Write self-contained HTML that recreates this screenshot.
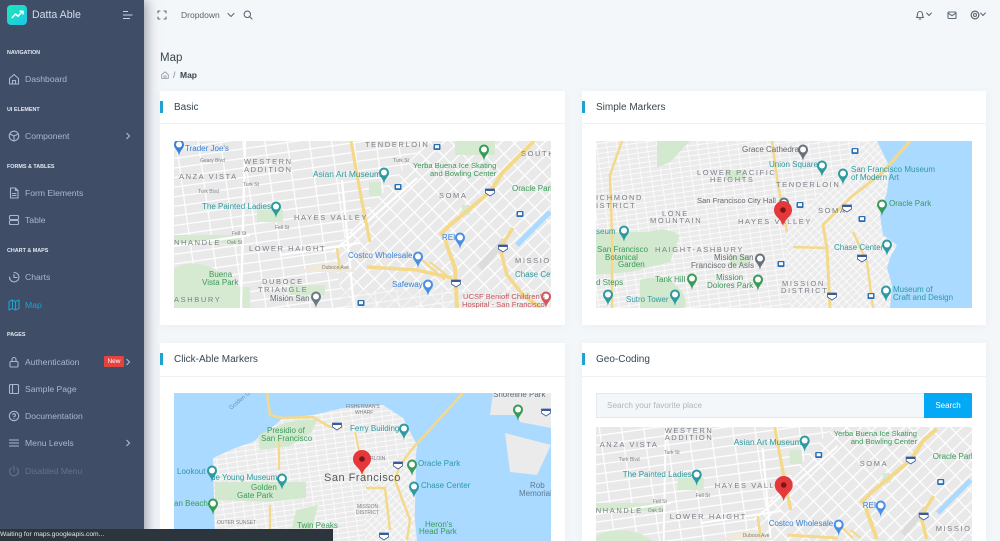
<!DOCTYPE html>
<html lang="en"><head><meta charset="utf-8"><title>Map</title>
<style>
*{box-sizing:border-box}
html,body{margin:0;padding:0;width:1000px;height:541px;overflow:hidden;background:#f4f7fa;font-family:"Liberation Sans",sans-serif}
#w{position:absolute;left:0;top:0;width:1000px;height:541px;overflow:hidden;filter:blur(.3px)}
.a{position:absolute;white-space:nowrap}
#side{position:absolute;left:0;top:0;width:144px;height:541px;background:#3f4d67;box-shadow:2px 0 12px rgba(60,70,90,.55)}
.sec{position:absolute;left:7px;font-size:5.4px;font-weight:bold;color:#e4e9f2;line-height:8px;white-space:nowrap}
.nav{position:absolute;left:25px;font-size:8.6px;color:#a9b7d0;line-height:12px;white-space:nowrap}
.ic{position:absolute;left:8px;width:12px;height:12px;fill:none;stroke:#a9b7d0;stroke-width:1.1;stroke-linecap:round;stroke-linejoin:round}
.chev{position:absolute;left:125px;width:6px;height:8px;fill:none;stroke:#a9b7d0;stroke-width:1.2}
.card{position:absolute;background:#fff;box-shadow:0 1px 8px rgba(69,90,100,.06)}
.bar{position:absolute;width:3px;height:12px;background:#1ea3cf}
.ct{position:absolute;font-size:10px;color:#37474f;line-height:14px;white-space:nowrap}
.hl{position:absolute;height:1px;background:#f1f1f1}
svg.map{position:absolute;display:block;font-family:"Liberation Sans",sans-serif;filter:blur(.25px)}
.hd{fill:none;stroke:#5f6b78;stroke-width:1.1;stroke-linecap:round;stroke-linejoin:round}
.p{font-size:8px}.m{font-size:7.6px}.b{fill:#3b82d6}.t{fill:#2c9aa0}.g{fill:#3a9a58}.r{fill:#c4585d}
.n{font-size:7.5px;fill:#7b8088;letter-spacing:1.6px}
.s{font-size:5px;fill:#7d7f84}
</style></head><body>
<svg width="0" height="0" style="position:absolute"><defs>
<pattern id="g1" width="22" height="9.5" patternUnits="userSpaceOnUse" patternTransform="rotate(-8)"><rect width="22" height="9.5" fill="#e9e9e9"/><path d="M0 .6H22M.6 0V9.5" stroke="#fff" stroke-width="1.2"/></pattern>
<pattern id="g2" width="15" height="10" patternUnits="userSpaceOnUse" patternTransform="rotate(-44)"><rect width="15" height="10" fill="#e9e9e9"/><path d="M0 .6H15M.6 0V10" stroke="#fff" stroke-width="1.2"/></pattern>
<pattern id="g3" width="10" height="5" patternUnits="userSpaceOnUse" patternTransform="rotate(-8)"><rect width="10" height="5" fill="#ebebeb"/><path d="M0 .4H10M.4 0V5" stroke="#fff" stroke-width=".7"/></pattern>
<pattern id="g4" width="7" height="5" patternUnits="userSpaceOnUse" patternTransform="rotate(-44)"><rect width="7" height="5" fill="#ebebeb"/><path d="M0 .4H7M.4 0V5" stroke="#fff" stroke-width=".7"/></pattern>
<g id="pin"><path d="M0 6C-1-.5-5-1-5-5.500A5 5 0 1 1 5-5.500C5-1 1-.5 0 6Z"/><circle cy="-5.500" r="3" fill="#fff"/></g>
<g id="tr"><rect x="-3.500" y="-3" width="7" height="6" rx="1" fill="#2a6fb5"/><rect x="-2" y="-1.800" width="4" height="3" fill="#fff"/></g>
<g id="sh"><path d="M-4.500-3H4.500V1L0 4-4.500 1Z" fill="#fff" stroke="#3a5a9a" stroke-width=".8"/><rect x="-4.500" y="-3" width="9" height="2" fill="#3a5a9a"/></g>
<g id="rp"><path d="M0 0C-2-8-9-9-9-16A9 9 0 1 1 9-16C9-9 2-8 0 0Z" fill="#e5383b"/><circle cy="-16" r="2.800" fill="#7d1518"/></g>
<g id="m1r">
<rect x="174" y="141" width="377" height="167" fill="url(#g1)"/>
<path d="M333 252L427 141H551V308H344Z" fill="url(#g2)"/>
<path d="M300 290L551 290V308H300Z" fill="url(#g1)" opacity=".55"/>
<path d="M174 243H245L242 235H174ZM257 210H283V222H257ZM174 269C195 255 225 270 240 290L232 308H174ZM290 285H325V295H290ZM369 182H381V196H369ZM455 141H495V155H455ZM462 205H470V215H462ZM212 287H250V308H212Z" fill="#d6ead2"/>
<path d="M174 246L250 235M333 252L417 178M280 255L360 243M245 141L241 308M342 180L354 308" stroke="#fff" stroke-width="2.200" fill="none"/>
<path d="M295 272H360L330 262Z" fill="#f1ead8"/>
<path d="M550 212L517 245" stroke="#aadaff" stroke-width="5" fill="none"/>
<path d="M505 240L480 268" stroke="#dcdcdc" stroke-width="7" fill="none"/>
<g fill="none" stroke="#f5d98a" stroke-linejoin="round">
<path d="M351 141L362 202 370 242" stroke-width="3.200"/>
<path d="M534 141L503 172 490 192 450 225 440 235" stroke-width="4"/>
<path d="M445 240L455 268 457 308" stroke-width="4"/>
<path d="M367 267L417 270 452 278" stroke-width="3.500"/>
<path d="M430 262L450 278M420 258L445 280" stroke-width="2"/>
<path d="M513 228L500 248 507 275 523 295 541 308" stroke-width="3.500"/>
<path d="M337 248L340 270" stroke-width="2.500"/>
</g>
</g>
<g id="m4r">
<rect x="175" y="159" width="377" height="114" fill="url(#g1)"/>
<path d="M333 252L412 159H552V273H336Z" fill="url(#g2)"/>
<path d="M175 243H245L242 235H175ZM257 210H283V222H257ZM175 268C195 258 220 262 232 273H175ZM369 182H381V196H369ZM462 205H470V215H462Z" fill="#d6ead2"/>
<path d="M175 246L250 235M333 252L417 178M280 255L360 243M245 159L243 273M342 180L350 273" stroke="#fff" stroke-width="2" fill="none"/>
<path d="M295 272H355L330 262Z" fill="#f1ead8"/>
<path d="M550 212L517 245" stroke="#aadaff" stroke-width="5" fill="none"/>
<path d="M505 240L482 266" stroke="#dcdcdc" stroke-width="6" fill="none"/>
<g fill="none" stroke="#f5d98a" stroke-linejoin="round">
<path d="M354 159L362 202 370 242" stroke-width="3.200"/>
<path d="M516 161L503 172 490 192 450 225 440 235" stroke-width="4"/>
<path d="M445 240L455 268 456 271" stroke-width="4"/>
<path d="M367 267L417 270" stroke-width="3"/>
<path d="M430 262L440 270M420 258L432 270" stroke-width="2"/>
<path d="M513 228L500 248 506 271" stroke-width="3.500"/>
<path d="M337 248L340 270" stroke-width="2.500"/>
</g>
</g>
</defs></svg>

<div id="w">
<div id="side">
<div class="a" style="left:7px;top:5px;width:20px;height:20px;border-radius:4px;background:linear-gradient(135deg,#1de9b6,#1dc4e9)"></div>
<svg class="a" style="left:11px;top:10px" width="13" height="10" fill="none" stroke="#fff" stroke-width="1.500" stroke-linejoin="round"><path d="M.8 8L4.500 4 7 6.200 11.500 1.500M8.500 1.300H12V4.500"/></svg>
<div class="a" style="left:32px;top:9px;font-size:10.6px;line-height:13px;color:#d5dce8">Datta Able</div>
<svg class="a" style="left:122px;top:10px" width="11" height="10" stroke="#c9d2e0" stroke-width="1.100"><path d="M1 1.500H6M1 5H10.500M1 8.500H8"/></svg>

<div class="sec" style="top:49px">NAVIGATION</div>
<svg class="ic" style="top:73px" viewBox="0 0 12 12"><path d="M1.500 5.500L6 1.500 10.500 5.500V11H1.500ZM4.500 11V7.500H7.500V11"/></svg><div class="nav" style="top:73px">Dashboard</div>
<div class="sec" style="top:106px">UI ELEMENT</div>
<svg class="ic" style="top:130px" viewBox="0 0 12 12"><circle cx="6" cy="6" r="4.800"/><path d="M1.800 4L6 6 10.200 4M6 6V10.800"/></svg><div class="nav" style="top:130px">Component</div>
<svg class="chev" style="top:132px" viewBox="0 0 6 8"><path d="M1.500 1L4.500 4 1.500 7"/></svg>
<div class="sec" style="top:163px">FORMS &amp; TABLES</div>
<svg class="ic" style="top:187px" viewBox="0 0 12 12"><path d="M2.500 1H7.500L10 3.500V11H2.500ZM7.500 1V3.500H10M4.500 6.500H8M4.500 8.500H8"/></svg><div class="nav" style="top:187px">Form Elements</div>
<svg class="ic" style="top:214px" viewBox="0 0 12 12"><rect x="1.500" y="1.500" width="9" height="4" rx="1"/><rect x="1.500" y="6.500" width="9" height="4" rx="1"/></svg><div class="nav" style="top:214px">Table</div>
<div class="sec" style="top:247px">CHART &amp; MAPS</div>
<svg class="ic" style="top:271px" viewBox="0 0 12 12"><path d="M6 1.500A4.700 4.700 0 1 1 1.500 6M6 3.500V6.500H9"/></svg><div class="nav" style="top:271px">Charts</div>
<svg class="ic" style="top:299px;stroke:#1ea3cf" viewBox="0 0 12 12"><path d="M1 2.500L4.500 1 7.500 2.500 11 1V9.500L7.500 11 4.500 9.500 1 11ZM4.500 1V9.500M7.500 2.500V11"/></svg><div class="nav" style="top:299px;color:#1ea3cf">Map</div>
<div class="sec" style="top:331px">PAGES</div>
<svg class="ic" style="top:356px" viewBox="0 0 12 12"><rect x="2" y="5.500" width="8" height="5.500" rx="1"/><path d="M4 5.500V3.500A2 2 0 0 1 8 3.500V5.500"/></svg><div class="nav" style="top:356px">Authentication</div>
<div class="a" style="left:104px;top:356px;width:20px;height:11px;background:#e5433f;color:#fff;font-size:6.5px;line-height:11px;text-align:center;border-radius:1px">New</div>
<svg class="chev" style="top:358px" viewBox="0 0 6 8"><path d="M1.500 1L4.500 4 1.500 7"/></svg>
<svg class="ic" style="top:383px" viewBox="0 0 12 12"><rect x="1.500" y="1.500" width="9" height="9" rx="1"/><path d="M4.500 1.500V10.500"/></svg><div class="nav" style="top:383px">Sample Page</div>
<svg class="ic" style="top:410px" viewBox="0 0 12 12"><circle cx="6" cy="6" r="4.700"/><path d="M4.700 4.700A1.400 1.400 0 1 1 6 6.500V7M6 8.700V8.800"/></svg><div class="nav" style="top:410px">Documentation</div>
<svg class="ic" style="top:437px" viewBox="0 0 12 12"><path d="M1.500 3H10.500M1.500 6H10.500M1.500 9H10.500"/></svg><div class="nav" style="top:437px">Menu Levels</div>
<svg class="chev" style="top:439px" viewBox="0 0 6 8"><path d="M1.500 1L4.500 4 1.500 7"/></svg>
<svg class="ic" style="top:465px;stroke:#65728a" viewBox="0 0 12 12"><path d="M3.200 3A4.400 4.400 0 1 0 8.800 3M6 1V6"/></svg><div class="nav" style="top:465px;color:#65728a">Disabled Menu</div>
</div>

<svg class="a hd" style="left:157px;top:10px" width="10" height="10" viewBox="0 0 10 10"><path d="M1 3V1H3M7 1H9V3M9 7V9H7M3 9H1V7"/></svg>
<div class="a" style="left:181px;top:9px;font-size:8.5px;line-height:12px;color:#59636f">Dropdown</div>
<svg class="a hd" style="left:227px;top:12px" width="8" height="6" viewBox="0 0 8 6"><path d="M1 1.500L4 4.500 7 1.500"/></svg>
<svg class="a hd" style="left:243px;top:10px" width="10" height="10" viewBox="0 0 10 10"><circle cx="4.300" cy="4.300" r="3.200"/><path d="M6.800 6.800L9 9"/></svg>
<svg class="a hd" style="left:915px;top:10px" width="10" height="10" viewBox="0 0 10 10"><path d="M1.500 7.500H8.500C7.500 6.500 7.500 5.500 7.500 4A2.500 2.500 0 0 0 2.500 4C2.500 5.500 2.500 6.500 1.500 7.500ZM4 9H6"/></svg>
<svg class="a hd" style="left:926px;top:12px" width="6" height="5" viewBox="0 0 6 5"><path d="M.7 1L3 3.500 5.300 1"/></svg>
<svg class="a hd" style="left:947px;top:10px" width="10" height="10" viewBox="0 0 10 10"><rect x="1" y="2" width="8" height="6.500" rx=".8"/><path d="M1 3L5 5.700 9 3"/></svg>
<svg class="a hd" style="left:970px;top:10px" width="10" height="10" viewBox="0 0 10 10"><circle cx="5" cy="5" r="1.500"/><circle cx="5" cy="5" r="3.800" stroke-dasharray="1.800 .6" stroke-width="1.300"/></svg>
<svg class="a hd" style="left:980px;top:12px" width="6" height="5" viewBox="0 0 6 5"><path d="M.7 1L3 3.500 5.300 1"/></svg>

<div class="a" style="left:160px;top:51px;font-size:11.5px;line-height:14px;color:#37474f">Map</div>
<svg class="a" style="left:161px;top:71px" width="8" height="8" viewBox="0 0 8 8" fill="none" stroke="#8a949e" stroke-width=".8"><path d="M.7 3.700L4 .8 7.300 3.700V7.400H.7ZM3 7.400V5H5V7.400"/></svg>
<div class="a" style="left:173px;top:70px;font-size:9px;line-height:11px;color:#7b8690">/</div>
<div class="a" style="left:180px;top:70px;font-size:8.500px;line-height:11px;font-weight:bold;color:#37474f">Map</div>

<div class="card" style="left:160px;top:91px;width:405px;height:234px"></div>
<div class="card" style="left:582px;top:91px;width:404px;height:234px"></div>
<div class="card" style="left:160px;top:343px;width:405px;height:198px"></div>
<div class="card" style="left:582px;top:343px;width:404px;height:198px"></div>
<div class="hl" style="left:160px;top:123px;width:405px"></div>
<div class="hl" style="left:582px;top:123px;width:404px"></div>
<div class="hl" style="left:160px;top:376px;width:405px"></div>
<div class="hl" style="left:582px;top:376px;width:404px"></div>
<div class="bar" style="left:160px;top:101px"></div>
<div class="bar" style="left:582px;top:101px"></div>
<div class="bar" style="left:160px;top:353px"></div>
<div class="bar" style="left:582px;top:353px"></div>
<div class="ct" style="left:174px;top:101px">Basic</div>
<div class="ct" style="left:596px;top:101px">Simple Markers</div>
<div class="ct" style="left:174px;top:353px">Click-Able Markers</div>
<div class="ct" style="left:596px;top:353px">Geo-Coding</div>

<svg class="map" style="left:174px;top:141px" width="377" height="167" viewBox="174 141 377 167">
<use href="#m1r"/>
<use href="#pin" x="179" y="150" fill="#3b82d6"/><use href="#pin" x="484" y="155" fill="#3a9a58"/><use href="#pin" x="384" y="178" fill="#2c9aa0"/><use href="#pin" x="276" y="212" fill="#2c9aa0"/><use href="#pin" x="460" y="243" fill="#4a8fe0"/><use href="#pin" x="418" y="262" fill="#4a8fe0"/><use href="#pin" x="428" y="290" fill="#4a8fe0"/><use href="#pin" x="316" y="302" fill="#6b7680"/><use href="#pin" x="546" y="302" fill="#d0565c"/>
<use href="#tr" x="437" y="147"/><use href="#tr" x="398" y="187"/><use href="#tr" x="520" y="214"/><use href="#tr" x="361" y="303"/>
<use href="#sh" x="490" y="192"/><use href="#sh" x="503" y="248"/><use href="#sh" x="456" y="283"/>
<text x="185" y="151" class="p b">Trader Joe's</text>
<text x="365" y="147" class="n">TENDERLOIN</text><text x="521" y="156" class="n">SOUTH</text>
<text x="244" y="164" class="n">WESTERN</text><text x="244" y="172" class="n">ADDITION</text><text x="179" y="179" class="n">ANZA VISTA</text>
<text x="413" y="168" class="m g">Yerba Buena Ice Skating</text><text x="430" y="176" class="m g">and Bowling Center</text>
<text x="313" y="177" class="t" font-size="8.4">Asian Art Museum</text><text x="512" y="191" class="p g">Oracle Park</text>
<text x="439" y="198" class="n">SOMA</text><text x="202" y="209" class="p t">The Painted Ladies</text><text x="294" y="220" class="n">HAYES VALLEY</text>
<text x="174" y="245" class="n">NHANDLE</text><text x="249" y="251" class="n">LOWER HAIGHT</text>
<text x="442" y="240" class="p b">REI</text><text x="348" y="258" class="p b">Costco Wholesale</text><text x="515" y="263" class="n">MISSIO</text>
<text x="515" y="277" class="p t">Chase Cen</text><text x="392" y="287" class="p b">Safeway</text>
<text x="209" y="277" class="p g">Buena</text><text x="202" y="285" class="p g">Vista Park</text>
<text x="262" y="284" class="n">DUBOCE</text><text x="258" y="292" class="n">TRIANGLE</text><text x="174" y="302" class="n">ASHBURY</text><text x="270" y="301" class="p" fill="#666c72">Misión San</text>
<text x="463" y="299" class="m r">UCSF Benioff Children's</text><text x="462" y="307" class="m r">Hospital - San Francisco</text>
<text x="200" y="162" class="s">Geary Blvd</text><text x="198" y="193" class="s">Turk Blvd</text><text x="243" y="186" class="s">Turk St</text><text x="393" y="162" class="s">Turk St</text><text x="275" y="229" class="s">Fell St</text><text x="232" y="235" class="s">Fell St</text><text x="227" y="244" class="s">Oak St</text><text x="322" y="269" class="s">Duboce Ave</text>
</svg>

<svg class="map" style="left:596px;top:141px" width="376" height="167" viewBox="596 141 376 167">
<rect x="596" y="141" width="376" height="167" fill="url(#g3)"/>
<path d="M785 232L866 141H900V308H790Z" fill="url(#g4)"/>
<path d="M877 141L890 168 887 192 880 215 883 235 897 245 890 258 887 268 892 285 890 308H972V141Z" fill="#aadaff"/>
<path d="M596 232H645C655 232 660 225 680 235L670 262 630 272 596 275ZM657 141H690L670 162 657 168ZM640 280C665 270 690 290 685 308H640ZM730 255H750V265H730ZM725 170H745V180H725Z" fill="#d3e9cf"/>
<g fill="none" stroke="#f5d98a" stroke-linejoin="round"><path d="M622 141L610 175 612 235V308" stroke-width="2.500"/><path d="M772 141L778 185 787 232" stroke-width="2.500"/><path d="M910 141L883 172 850 198 823 225 827 248 830 308" stroke-width="3"/><path d="M793 247L827 248" stroke-width="2.500"/><path d="M853 232L867 262 873 308" stroke-width="2.500"/></g>
<use href="#pin" x="803" y="155" fill="#68727c"/><use href="#pin" x="822" y="171" fill="#2c9aa0"/><use href="#pin" x="843" y="179" fill="#2c9aa0"/><use href="#pin" x="784" y="208" fill="#68727c"/><use href="#pin" x="882" y="210" fill="#3a9a58"/><use href="#pin" x="624" y="236" fill="#2c9aa0"/><use href="#pin" x="887" y="250" fill="#2c9aa0"/><use href="#pin" x="760" y="264" fill="#68727c"/><use href="#pin" x="692" y="284" fill="#3a9a58"/><use href="#pin" x="758" y="285" fill="#3a9a58"/><use href="#pin" x="608" y="300" fill="#2c9aa0"/><use href="#pin" x="675" y="300" fill="#2c9aa0"/><use href="#pin" x="886" y="296" fill="#2c9aa0"/>
<use href="#tr" x="855" y="151"/><use href="#tr" x="800" y="205"/><use href="#tr" x="862" y="219"/><use href="#tr" x="781" y="264"/><use href="#tr" x="871" y="296"/>
<use href="#sh" x="847" y="208"/><use href="#sh" x="862" y="258"/><use href="#sh" x="832" y="296"/>
<text x="742" y="152" class="p" fill="#666c72">Grace Cathedral</text><text x="769" y="167" class="p t">Union Square</text><text x="851" y="172" class="p t">San Francisco Museum</text><text x="851" y="180" class="p t">of Modern Art</text><text x="697" y="203" class="m" fill="#666c72">San Francisco City Hall</text><text x="889" y="206" class="p g">Oracle Park</text><text x="596" y="234" class="p t">seum</text><text x="597" y="252" class="p g">San Francisco</text><text x="605" y="260" class="p g">Botanical</text><text x="618" y="267" class="p g">Garden</text><text x="714" y="260" class="p" fill="#666c72">Misión San</text><text x="691" y="268" class="p" fill="#666c72">Francisco de Asís</text><text x="834" y="250" class="p t">Chase Center</text><text x="655" y="282" class="p g">Tank Hill</text><text x="716" y="280" class="p g">Mission</text><text x="707" y="288" class="p g">Dolores Park</text><text x="596" y="285" class="p g">d Steps</text><text x="626" y="302" class="p t">Sutro Tower</text><text x="893" y="292" class="p t">Museum of</text><text x="893" y="300" class="p t">Craft and Design</text>
<text x="697" y="175" class="n">LOWER PACIFIC</text><text x="710" y="182" class="n">HEIGHTS</text><text x="776" y="187" class="n">TENDERLOIN</text><text x="596" y="200" class="n">ICHMOND</text><text x="596" y="208" class="n">ISTRICT</text><text x="662" y="216" class="n">LONE</text><text x="650" y="223" class="n">MOUNTAIN</text><text x="738" y="224" class="n">HAYES VALLEY</text><text x="818" y="213" class="n">SOMA</text><text x="655" y="252" class="n">HAIGHT-ASHBURY</text><text x="782" y="286" class="n">MISSION</text><text x="781" y="293" class="n">DISTRICT</text>
<use href="#rp" x="783" y="226"/>
</svg>

<svg class="map" style="left:174px;top:393px" width="377" height="148" viewBox="174 393 377 148">
<rect x="174" y="393" width="377" height="148" fill="#aadaff"/>
<path d="M213 458L235 448 253 442 275 425 283 418 313 415 343 408 383 405 403 418 417 445 415 465 410 485 413 500 417 541H215Z" fill="url(#g3)"/>
<path d="M365 480L410 450 416 470 414 541H365Z" fill="url(#g4)"/>
<path d="M258 436C275 425 295 418 317 420L312 432 290 446 260 450ZM215 482H306V498L270 502 215 500ZM296 510L318 505 312 530 292 528Z" fill="#d3e9cf"/>
<path d="M493 393H551V428L520 422 517 415 490 415ZM505 433L551 445 537 475 510 472Z" fill="#ebebeb"/>
<g fill="none" stroke="#f5d98a" stroke-linejoin="round"><path d="M267 393L270 415 283 418 313 417 330 427 343 427" stroke-width="2.500"/><path d="M279 440V470M270 505V540" stroke-width="2.200"/><path d="M355 432L365 480" stroke-width="2"/><path d="M463 393L413 448 400 465 395 480 410 520 407 540" stroke-width="2.500"/><path d="M366 488H385L390 530" stroke-width="2.500"/></g>
<use href="#pin" x="518" y="415" fill="#3a9a58"/><use href="#pin" x="404" y="434" fill="#2c9aa0"/><use href="#pin" x="412" y="470" fill="#3a9a58"/><use href="#pin" x="212" y="476" fill="#2c9aa0"/><use href="#pin" x="282" y="484" fill="#2c9aa0"/><use href="#pin" x="414" y="492" fill="#2c9aa0"/><use href="#pin" x="213" y="509" fill="#3a9a58"/>
<use href="#sh" x="337" y="426"/><use href="#sh" x="398" y="465"/><use href="#sh" x="384" y="536"/><use href="#sh" x="546" y="412"/>
<text x="493" y="397" class="p" fill="#5f6b78">Shoreline Park</text><text x="231" y="410" fill="#6c95b8" transform="rotate(-40 231 410)" font-size="6">Golden Gate</text>
<text x="346" y="408" class="s">FISHERMAN'S</text><text x="355" y="414" class="s">WHARF</text><text x="350" y="431" class="p t">Ferry Building</text>
<text x="267" y="433" class="p g">Presidio of</text><text x="261" y="441" class="p g">San Francisco</text><text x="177" y="474" class="p t">Lookout</text><text x="418" y="466" class="p t">Oracle Park</text>
<text x="353" y="460" class="s">TENDERLOIN</text><text x="324" y="481" font-size="11" letter-spacing=".5" fill="#55585c">San Francisco</text>
<text x="211" y="480" class="p t">de Young Museum</text><text x="251" y="490" class="p g">Golden</text><text x="237" y="498" class="p g">Gate Park</text><text x="421" y="488" class="p t">Chase Center</text>
<text x="530" y="488" class="p" fill="#5e7a90">Rob</text><text x="519" y="496" class="p" fill="#5e7a90">Memorial</text><text x="174" y="506" class="p g">an Beach</text>
<text x="357" y="508" class="s">MISSION</text><text x="356" y="514" class="s">DISTRICT</text><text x="217" y="524" class="s">OUTER SUNSET</text><text x="297" y="528" class="p g">Twin Peaks</text><text x="425" y="527" class="p g">Heron's</text><text x="419" y="534" class="p g">Head Park</text>
<use href="#rp" x="362" y="475"/>
</svg>

<div class="a" style="left:596px;top:393px;width:329px;height:25px;background:#f4f7fa;border:1px solid #e3e8ee;font-size:8.2px;line-height:23px;padding-left:10px;color:#aeb5bd">Search your favorite place</div>
<div class="a" style="left:924px;top:393px;width:48px;height:25px;background:#04a9f5;color:#fff;font-size:8px;line-height:25px;text-align:center;border-radius:0 1px 1px 0">Search</div>

<svg class="map" style="left:596px;top:427px" width="376" height="114" viewBox="175.300 159 376 114">
<use href="#m4r"/>
<use href="#pin" x="384" y="178" fill="#2c9aa0"/><use href="#pin" x="276" y="212" fill="#2c9aa0"/><use href="#pin" x="460" y="243" fill="#4a8fe0"/><use href="#pin" x="418" y="262" fill="#4a8fe0"/>
<use href="#tr" x="398" y="187"/><use href="#tr" x="520" y="214"/><use href="#sh" x="490" y="192"/><use href="#sh" x="503" y="248"/>
<text x="244" y="165" class="n">WESTERN</text><text x="244" y="172" class="n">ADDITION</text><text x="179" y="179" class="n">ANZA VISTA</text>
<text x="413" y="168" class="m g">Yerba Buena Ice Skating</text><text x="430" y="176" class="m g">and Bowling Center</text>
<text x="313" y="177" class="t" font-size="8.4">Asian Art Museum</text><text x="512" y="191" class="p g">Oracle Park</text>
<text x="439" y="198" class="n">SOMA</text><text x="202" y="209" class="p t">The Painted Ladies</text><text x="294" y="220" class="n">HAYES VALLEY</text>
<text x="175" y="245" class="n">NHANDLE</text><text x="249" y="251" class="n">LOWER HAIGHT</text><text x="442" y="240" class="p b">REI</text><text x="348" y="258" class="p b">Costco Wholesale</text><text x="515" y="263" class="n">MISSIO</text>
<text x="198" y="193" class="s">Turk Blvd</text><text x="243" y="186" class="s">Turk St</text><text x="275" y="229" class="s">Fell St</text><text x="232" y="235" class="s">Fell St</text><text x="227" y="244" class="s">Oak St</text><text x="322" y="269" class="s">Duboce Ave</text>
<use href="#rp" x="363" y="233"/>
</svg>

<div class="a" style="left:0;top:529px;width:333px;height:12px;background:#2b353b;color:#e2e6e8;font-size:6.7px;line-height:12px">Waiting for maps.googleapis.com...</div>
</div>
</body></html>
